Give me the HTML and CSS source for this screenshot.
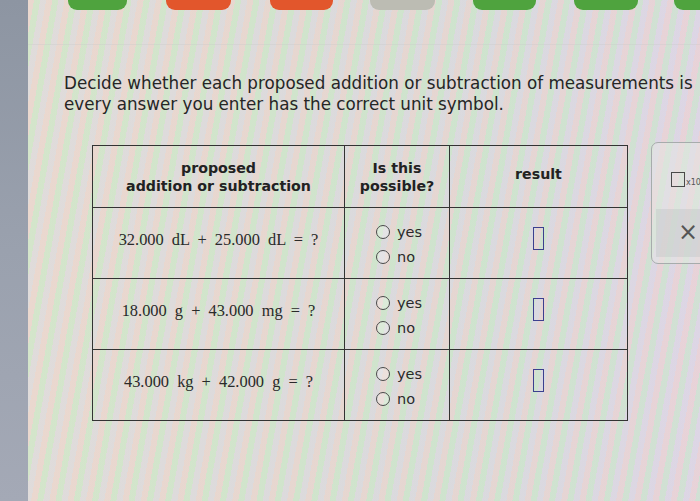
FILE: index.html
```html
<!DOCTYPE html>
<html>
<head>
<meta charset="utf-8">
<link rel="stylesheet" href="styles.css">
</head>
<body>
<div class="screen">
  <div class="edge"></div>
  <div class="main">
    <div class="pills">
      <span class="pill green p1"></span>
      <span class="pill orange p2"></span>
      <span class="pill orange p3"></span>
      <span class="pill grey p4"></span>
      <span class="pill green p5"></span>
      <span class="pill green p6"></span>
      <span class="pill green p7"></span>
    </div>
    <div class="content">
      <p class="prompt">Decide whether each proposed addition or subtraction of measurements is<br>every answer you enter has the correct unit symbol.</p>
      <div class="work">
        <table class="grid">
          <tr class="head">
            <th class="c1">proposed<br>addition or subtraction</th>
            <th class="c2">Is this<br>possible?</th>
            <th class="c3"><span class="lift">result</span></th>
          </tr>
          <tr>
            <td class="eq"><span class="lift">32.000 dL + 25.000 dL = ?</span></td>
            <td class="opts"><label class="opt"><span class="radio"></span>yes</label><label class="opt"><span class="radio"></span>no</label></td>
            <td class="res"><span class="box"></span></td>
          </tr>
          <tr>
            <td class="eq"><span class="lift">18.000 g + 43.000 mg = ?</span></td>
            <td class="opts"><label class="opt"><span class="radio"></span>yes</label><label class="opt"><span class="radio"></span>no</label></td>
            <td class="res"><span class="box"></span></td>
          </tr>
          <tr>
            <td class="eq"><span class="lift">43.000 kg + 42.000 g = ?</span></td>
            <td class="opts"><label class="opt"><span class="radio"></span>yes</label><label class="opt"><span class="radio"></span>no</label></td>
            <td class="res"><span class="box"></span></td>
          </tr>
        </table>
        <div class="side">
          <div class="tool"><span class="sq"></span><span class="x10">x10</span></div>
          <div class="clear">×</div>
        </div>
      </div>
    </div>
  </div>
</div>
</body>
</html>
```
FILE: styles.css
```css
html, body { margin: 0; padding: 0; }
body { width: 700px; height: 501px; overflow: hidden; background: #dedfd6; }
.screen { display: flex; width: 700px; height: 501px; overflow: hidden; }
.edge { width: 28px; flex: none; background: linear-gradient(180deg, #8d95a2 0%, #9aa1ae 50%, #a4a9b6 100%); }
.main {
  flex: 1; min-width: 0; overflow: hidden; position: relative;
  background:
    repeating-linear-gradient(100deg, rgba(240,195,205,0.4) 0 6px, rgba(185,228,195,0.4) 6px 12px, rgba(212,200,238,0.35) 12px 18px),
    linear-gradient(90deg, #e6e6d0 0%, #e0e4d2 40%, #dde3d6 70%, #e2dde0 100%);
}
.pills { position: relative; height: 44px; border-bottom: 1px solid rgba(200,200,200,0.35); }
.pill { position: absolute; top: -10px; height: 20px; border-radius: 9px; }
.green { background: #4fa33e; }
.orange { background: #e2562c; }
.grey { background: #bcbcb3; }
.p1 { left: 40px; width: 59px; }
.p2 { left: 138px; width: 65px; }
.p3 { left: 242px; width: 63px; }
.p4 { left: 342px; width: 65px; }
.p5 { left: 445px; width: 63px; }
.p6 { left: 546px; width: 64px; }
.p7 { left: 646px; width: 64px; }
.content { padding: 28px 0 0 36px; }
.prompt {
  margin: 0; white-space: nowrap;
  font-family: "DejaVu Sans", Verdana, sans-serif; font-size: 16.75px; line-height: 21px;
  color: #262626;
}
.work { display: flex; align-items: flex-start; margin-top: 30px; }
.grid {
  flex: none;
  margin-left: 28px; border-collapse: collapse; border: 1.5px solid #333; table-layout: fixed;
  font-family: "DejaVu Sans", Verdana, sans-serif; color: #222;
}
.grid th, .grid td { border: 1.5px solid #333; padding: 0; }
.head th { height: 61px; font-weight: bold; font-size: 14.2px; line-height: 18px; }
.c1 { width: 251px; }
.c2 { width: 104px; }
.c3 { width: 177px; }
.lift { position: relative; top: -3px; }
.grid td { height: 68px; }
.eq { font-family: "Liberation Serif", "Times New Roman", serif; font-size: 16.4px; text-align: center; color: #2a2a2a; word-spacing: 4px; }
.opts { padding-left: 31px !important; padding-top: 2px !important; }
.opt { display: flex; align-items: center; gap: 7px; font-size: 14.5px; height: 25px; color: #2a2a2a; }
.radio { width: 12px; height: 12px; border: 1.3px solid #4a4a4a; border-radius: 50%; background: rgba(255,255,255,0.25); }
.res { text-align: center; }
.box { display: inline-block; width: 9px; height: 21px; border: 1.5px solid #3c3f8f; vertical-align: middle; position: relative; top: -5px; }
.side {
  flex: none;
  margin-left: 23px; margin-top: -3px; width: 70px; height: 122px;
  border: 1.5px solid #a7acac; border-radius: 7px; background: rgba(230,232,228,0.5);
  display: flex; flex-direction: column; box-sizing: border-box; padding: 26px 0 0 0;
}
.tool { display: flex; align-items: flex-end; padding-left: 19px; height: 18px; }
.sq { width: 12px; height: 13px; border: 1.5px solid #4a4a4a; }
.x10 { font-family: "DejaVu Sans", sans-serif; font-size: 8px; color: #555; margin-left: 1px; }
.clear {
  margin: 22px 0 0 4px; height: 48px; background: rgba(195,200,200,0.45);
  font-family: "DejaVu Sans", sans-serif; font-size: 24px; color: #555; line-height: 46px; padding-left: 22px;
}
```
